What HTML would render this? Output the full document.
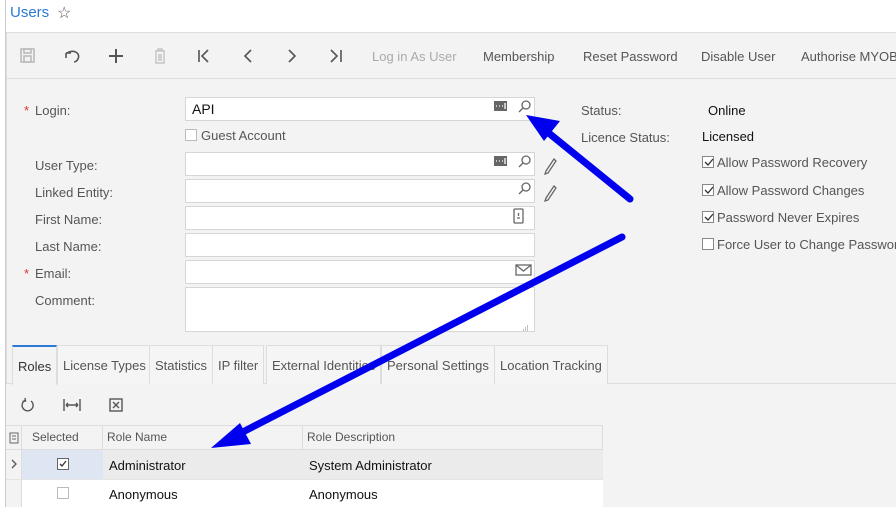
<!DOCTYPE html>
<html><head><style>
*{box-sizing:border-box;margin:0;padding:0}
body{width:896px;height:507px;overflow:hidden;background:#fff;font-family:"Liberation Sans",sans-serif;font-size:13px;color:#444;position:relative}
.a{position:absolute;white-space:nowrap}
.f{position:absolute;background:#fff;border:1px solid #d6d6d6;left:185px;width:350px;height:24px}
.lbl{position:absolute;left:35px;color:#555}
.req{position:absolute;left:24px;color:#e03030}
.cb{position:absolute;width:12px;height:12px;border:1px solid #888;background:#fff}
.tab{position:absolute;top:345px;height:39px;border:1px solid #ddd;border-bottom:none;background:#f5f5f5;padding:12px 5px 0;color:#555}
.th{position:absolute;top:426px;height:24px;padding:4px 4px;font-size:12px;color:#555;border-right:1px solid #ddd}
</style></head><body>
<div class="a" style="left:5px;top:0;width:1px;height:507px;background:#ccc"></div>
<div class="a" style="left:10px;top:4px;font-size:15px;color:#2b7bd6">Users</div>
<div class="a" style="left:57px;top:3px;font-size:16px;color:#555">☆</div>
<div class="a" style="left:6px;top:32px;width:890px;height:475px;background:#f3f3f3;border-top:1px solid #ddd;border-left:1px solid #ddd"></div>
<div class="a" style="left:6px;top:78px;width:890px;height:1px;background:#ddd"></div>
<!-- toolbar -->
<svg class="a" style="left:18px;top:46px" width="340" height="20" fill="none" stroke-width="1.6">
<rect x="3" y="3" width="13" height="13" stroke="#bbb"/><rect x="6" y="3" width="7" height="4" stroke="#bbb"/><rect x="6" y="10" width="7" height="6" stroke="#bbb"/>
<path d="M48 7 L48 12 M48 7 L53 7 M48.5 7.5 C54 3 63 6 60 13 C59 15 57 16 56 16" stroke="#555"/>
<path d="M98 3 V17 M91 10 H105" stroke="#555" stroke-width="2"/>
<path d="M137 5 H147 M140 5 V3 H144 V5 M138 6 V17 H146 V6 M141 8 V15 M143 8 V15" stroke="#bbb" stroke-width="1.2"/>
<path d="M181 4 V16 M190 4 L184 10 L190 16" stroke="#555"/>
<path d="M233 4 L227 10 L233 16" stroke="#555"/>
<path d="M271 4 L277 10 L271 16" stroke="#555"/>
<path d="M313 4 L319 10 L313 16 M323 4 V16" stroke="#555"/>
</svg>
<div class="a" style="left:372px;top:49px;color:#aaa">Log in As User</div>
<div class="a" style="left:483px;top:49px;color:#555">Membership</div>
<div class="a" style="left:583px;top:49px;color:#555">Reset Password</div>
<div class="a" style="left:701px;top:49px;color:#555">Disable User</div>
<div class="a" style="left:801px;top:49px;color:#555">Authorise MYOB</div>
<!-- form -->
<div class="req" style="top:103px">*</div><div class="lbl" style="top:103px">Login:</div>
<div class="f" style="top:97px"><span class="a" style="left:6px;top:3px;color:#111;font-size:14px">API</span></div>
<div class="cb" style="left:185px;top:129px;border-color:#bbb"></div><div class="a" style="left:201px;top:128px;color:#555">Guest Account</div>
<div class="lbl" style="top:158px">User Type:</div><div class="f" style="top:152px"></div>
<div class="lbl" style="top:185px">Linked Entity:</div><div class="f" style="top:179px"></div>
<div class="lbl" style="top:212px">First Name:</div><div class="f" style="top:206px"></div>
<div class="lbl" style="top:239px">Last Name:</div><div class="f" style="top:233px"></div>
<div class="req" style="top:266px">*</div><div class="lbl" style="top:266px">Email:</div><div class="f" style="top:260px"></div>
<div class="lbl" style="top:293px">Comment:</div><div class="f" style="top:287px;height:45px"></div>
<svg class="a" style="left:490px;top:97px" width="70" height="240" fill="none" stroke="#666" stroke-width="1.3">
<rect x="4" y="4" width="13" height="10" fill="#666" stroke="none"/><path d="M6 9h1M9 9h1M12 9h1M15 6v6" stroke="#fff"/>
<circle cx="36" cy="8" r="4"/><path d="M33 11 L29 15"/>
<rect x="4" y="59" width="13" height="10" fill="#666" stroke="none"/><path d="M6 64h1M9 64h1M12 64h1M15 61v6" stroke="#fff"/>
<circle cx="36" cy="63" r="4"/><path d="M33 66 L29 70"/>
<path d="M56 74 L64 62 L66 64 L58 76 L55 77 Z"/>
<circle cx="36" cy="90" r="4"/><path d="M33 93 L29 97"/>
<path d="M56 101 L64 89 L66 91 L58 103 L55 104 Z"/>
<rect x="24" y="112" width="9" height="14" rx="1"/><path d="M28.5 116v3M27 121h3"/>
<rect x="26" y="168" width="15" height="10"/><path d="M26 168 L33.5 174 L41 168"/>
<path d="M37 229h1M35 231h1M37 231h1M33 233h1M35 233h1M37 233h1" stroke="#999"/>
</svg>
<div class="a" style="left:581px;top:103px;color:#555">Status:</div>
<div class="a" style="left:708px;top:103px;color:#111">Online</div>
<div class="a" style="left:581px;top:130px;color:#555">Licence Status:</div>
<div class="a" style="left:702px;top:129px;color:#111">Licensed</div>
<div class="cb" style="left:702px;top:156px"></div><div class="a" style="left:717px;top:155px;color:#555">Allow Password Recovery</div>
<div class="cb" style="left:702px;top:184px"></div><div class="a" style="left:717px;top:183px;color:#555">Allow Password Changes</div>
<div class="cb" style="left:702px;top:211px"></div><div class="a" style="left:717px;top:210px;color:#555">Password Never Expires</div>
<div class="cb" style="left:702px;top:238px"></div><div class="a" style="left:717px;top:237px;color:#555">Force User to Change Password</div>
<svg class="a" style="left:702px;top:156px" width="14" height="70" fill="none" stroke="#333" stroke-width="1.3">
<path d="M3 6 L6 9 L11 3"/><path d="M3 34 L6 37 L11 31"/><path d="M3 61 L6 64 L11 58"/></svg>
<!-- tabs -->
<div class="a" style="left:6px;top:383px;width:890px;height:124px;background:#f3f3f3;border-top:1px solid #ddd"></div>
<div class="tab" style="left:12px;background:#f3f3f3;border-top:2px solid #2b7bd6;color:#333;border-bottom:none;height:40px">Roles</div>
<div class="tab" style="left:57px">License Types</div>
<div class="tab" style="left:149px">Statistics</div>
<div class="tab" style="left:212px">IP filter</div>
<div class="tab" style="left:266px">External Identities</div>
<div class="tab" style="left:381px">Personal Settings</div>
<div class="tab" style="left:494px">Location Tracking</div>
<div class="a" style="left:607px;top:383px;width:289px;height:1px;background:#ddd"></div>
<svg class="a" style="left:18px;top:395px" width="110" height="20" fill="none" stroke="#555" stroke-width="1.4">
<path d="M13 6 A5.5 5.5 0 1 1 7 5.5 M7 3 L7.5 6 L4.5 6.5"/>
<path d="M46 4v12M62 4v12M48 10h12M48 10l2-2M48 10l2 2M60 10l-2-2M60 10l-2 2"/>
<rect x="92" y="4" width="12" height="12"/><path d="M95 7l6 6M101 7l-6 6"/>
</svg>
<!-- grid -->
<div class="a" style="left:6px;top:425px;width:597px;height:82px;background:#fff;border-top:1px solid #ddd"></div>
<div class="a" style="left:6px;top:426px;width:597px;height:24px;background:#f3f3f3;border-bottom:1px solid #ddd"></div>
<div class="th" style="left:6px;width:16px;padding:0"></div>
<div class="th" style="left:22px;width:81px;padding-left:10px">Selected</div>
<div class="th" style="left:103px;width:200px">Role Name</div>
<div class="th" style="left:303px;width:300px">Role Description</div>
<svg class="a" style="left:9px;top:432px" width="10" height="12" fill="none" stroke="#666"><rect x="1" y="1" width="8" height="10"/><path d="M3 4h4M3 7h4"/></svg>
<div class="a" style="left:6px;top:450px;width:597px;height:29px;background:#ebebec"></div>
<div class="a" style="left:22px;top:450px;width:81px;height:29px;background:#dde6f2"></div>
<div class="a" style="left:6px;top:450px;width:16px;height:57px;background:#f3f3f3;border-right:1px solid #ddd"></div>
<div class="a" style="left:6px;top:479px;width:597px;height:1px;background:#e4e4e4"></div>
<svg class="a" style="left:9px;top:458px" width="10" height="12" fill="none" stroke="#555" stroke-width="1.3"><path d="M3 2l4 4-4 4"/></svg>
<div class="cb" style="left:57px;top:458px;border-color:#666"></div>
<svg class="a" style="left:57px;top:458px" width="12" height="12" fill="none" stroke="#333" stroke-width="1.3"><path d="M3 6l2 2 4-5"/></svg>
<div class="a" style="left:109px;top:458px;color:#111">Administrator</div>
<div class="a" style="left:309px;top:458px;color:#111">System Administrator</div>
<div class="cb" style="left:57px;top:487px;border-color:#bbb"></div>
<div class="a" style="left:109px;top:487px;color:#111">Anonymous</div>
<div class="a" style="left:309px;top:487px;color:#111">Anonymous</div>
<!-- arrows -->
<svg class="a" style="left:0;top:0" width="896" height="507">
<path d="M630 199 L545 130" stroke="#0000ee" stroke-width="7" stroke-linecap="round"/>
<polygon points="526,115 560,121 544,141" fill="#0000ee"/>
<path d="M622 237 L235 436" stroke="#0000ee" stroke-width="7" stroke-linecap="round"/>
<polygon points="211,448 240,423 251,444" fill="#0000ee"/>
</svg>
</body></html>
